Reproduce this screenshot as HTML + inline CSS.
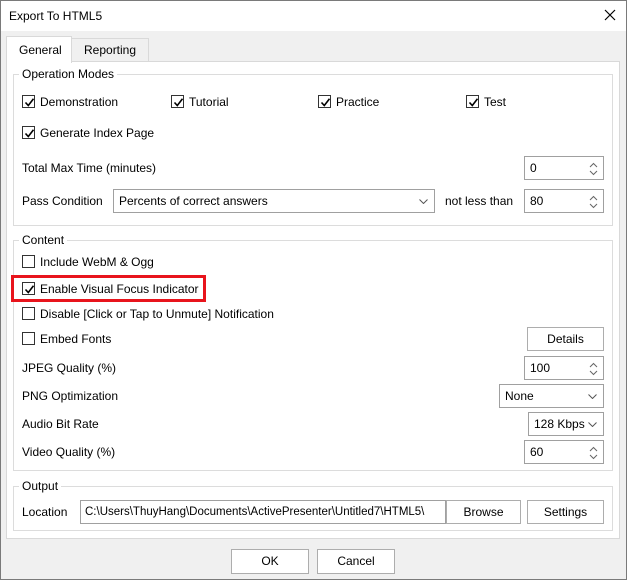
<!DOCTYPE html>
<html><head><meta charset="utf-8"><style>
*{box-sizing:border-box;margin:0;padding:0}
body{width:627px;height:580px;overflow:hidden;background:#f0f0f0;font-family:"Liberation Sans",sans-serif;font-size:12px;color:#000;position:relative}
.a{position:absolute;white-space:nowrap}
.win{position:absolute;left:0;top:0;width:627px;height:580px;border:1px solid #7a7a7a}
.title{position:absolute;left:1px;top:1px;width:625px;height:30px;background:#fff}
.panel{position:absolute;left:6px;top:61px;width:614px;height:478px;background:#fff;border:1px solid #d9d9d9}
.grp{position:absolute;border:1px solid #dcdcdc}
.gl{position:absolute;background:#fff;padding:0 3px;line-height:14px}
.cb{position:absolute;width:13px;height:13px;border:1px solid #333;background:#fff}
.cb svg{position:absolute;left:1px;top:1px}
.box{position:absolute;border:1px solid #a0a0a0;background:#fff;padding-left:5px;line-height:23px}
.arr{position:absolute;right:5px;top:5px}
.dd{position:absolute;right:6px;top:9px}
.btn{position:absolute;border:1px solid #adadad;background:#fff;text-align:center;line-height:22px}
</style></head><body>
<svg width="0" height="0" style="position:absolute"><defs>
<symbol id="ck" viewBox="0 0 11 11"><path d="M1.5 5.5L4.3 8.5L9.5 1.8" fill="none" stroke="#000" stroke-width="1.6"/></symbol>
<symbol id="sp" viewBox="0 0 9 14"><path d="M1 5L4.5 1.5L8 5M1 9L4.5 12.5L8 9" fill="none" stroke="#666" stroke-width="1"/></symbol>
<symbol id="dn" viewBox="0 0 9 5"><path d="M0.5 0.5L4.5 4.5L8.5 0.5" fill="none" stroke="#555" stroke-width="1"/></symbol>
</defs></svg>
<div class="win"></div>
<div class="title"></div>
<div class="a" style="left:9px;top:9px">Export To HTML5</div>
<svg class="a" style="left:604px;top:9px" width="12" height="12"><path d="M1 1L11 11M11 1L1 11" stroke="#000" stroke-width="1.2"/></svg>

<div class="a" style="left:71px;top:38px;width:78px;height:24px;background:#f0f0f0;border:1px solid #d9d9d9;border-bottom:none"></div>
<div class="a" style="left:84px;top:43px">Reporting</div>
<div class="panel"></div>
<div class="a" style="left:6px;top:36px;width:66px;height:27px;background:#fff;border:1px solid #d9d9d9;border-bottom:none"></div>
<div class="a" style="left:19px;top:43px">General</div>

<div class="grp" style="left:13px;top:74px;width:600px;height:152px"></div>
<div class="gl" style="left:19px;top:67px">Operation Modes</div>
<div class="cb" style="left:22px;top:95px"><svg width="11" height="11"><use href="#ck"/></svg></div><div class="a" style="left:40px;top:95px">Demonstration</div>
<div class="cb" style="left:171px;top:95px"><svg width="11" height="11"><use href="#ck"/></svg></div><div class="a" style="left:189px;top:95px">Tutorial</div>
<div class="cb" style="left:318px;top:95px"><svg width="11" height="11"><use href="#ck"/></svg></div><div class="a" style="left:336px;top:95px">Practice</div>
<div class="cb" style="left:466px;top:95px"><svg width="11" height="11"><use href="#ck"/></svg></div><div class="a" style="left:484px;top:95px">Test</div>
<div class="cb" style="left:22px;top:126px"><svg width="11" height="11"><use href="#ck"/></svg></div><div class="a" style="left:40px;top:126px">Generate Index Page</div>
<div class="a" style="left:22px;top:161px">Total Max Time (minutes)</div>
<div class="box" style="left:524px;top:156px;width:80px;height:24px">0<svg class="arr" width="9" height="14"><use href="#sp"/></svg></div>
<div class="a" style="left:22px;top:194px">Pass Condition</div>
<div class="box" style="left:113px;top:189px;width:322px;height:24px">Percents of correct answers<svg class="dd" width="9" height="5"><use href="#dn"/></svg></div>
<div class="a" style="left:445px;top:194px">not less than</div>
<div class="box" style="left:524px;top:189px;width:80px;height:24px">80<svg class="arr" width="9" height="14"><use href="#sp"/></svg></div>

<div class="grp" style="left:13px;top:240px;width:600px;height:231px"></div>
<div class="gl" style="left:19px;top:233px">Content</div>
<div class="cb" style="left:22px;top:255px"></div><div class="a" style="left:40px;top:255px">Include WebM &amp; Ogg</div>
<div class="a" style="left:11px;top:275px;width:195px;height:27px;border:3px solid #e8141c"></div>
<div class="cb" style="left:22px;top:282px"><svg width="11" height="11"><use href="#ck"/></svg></div><div class="a" style="left:40px;top:282px">Enable Visual Focus Indicator</div>
<div class="cb" style="left:22px;top:307px"></div><div class="a" style="left:40px;top:307px">Disable [Click or Tap to Unmute] Notification</div>
<div class="cb" style="left:22px;top:332px"></div><div class="a" style="left:40px;top:332px">Embed Fonts</div>
<div class="btn" style="left:527px;top:327px;width:77px;height:24px">Details</div>
<div class="a" style="left:22px;top:361px">JPEG Quality (%)</div>
<div class="box" style="left:524px;top:356px;width:80px;height:24px">100<svg class="arr" width="9" height="14"><use href="#sp"/></svg></div>
<div class="a" style="left:22px;top:389px">PNG Optimization</div>
<div class="box" style="left:499px;top:384px;width:105px;height:24px">None<svg class="dd" width="9" height="5"><use href="#dn"/></svg></div>
<div class="a" style="left:22px;top:417px">Audio Bit Rate</div>
<div class="box" style="left:528px;top:412px;width:76px;height:24px">128 Kbps<svg class="dd" width="9" height="5"><use href="#dn"/></svg></div>
<div class="a" style="left:22px;top:445px">Video Quality (%)</div>
<div class="box" style="left:524px;top:440px;width:80px;height:24px">60<svg class="arr" width="9" height="14"><use href="#sp"/></svg></div>

<div class="grp" style="left:13px;top:486px;width:600px;height:45px"></div>
<div class="gl" style="left:19px;top:479px">Output</div>
<div class="a" style="left:22px;top:505px">Location</div>
<div class="box" style="left:80px;top:500px;width:366px;height:24px;overflow:hidden;padding-left:4px;font-size:11.5px">C:\Users\ThuyHang\Documents\ActivePresenter\Untitled7\HTML5\</div>
<div class="btn" style="left:446px;top:500px;width:75px;height:24px">Browse</div>
<div class="btn" style="left:527px;top:500px;width:77px;height:24px">Settings</div>

<div class="btn" style="left:231px;top:549px;width:78px;height:25px;line-height:23px">OK</div>
<div class="btn" style="left:317px;top:549px;width:78px;height:25px;line-height:23px">Cancel</div>
</body></html>
